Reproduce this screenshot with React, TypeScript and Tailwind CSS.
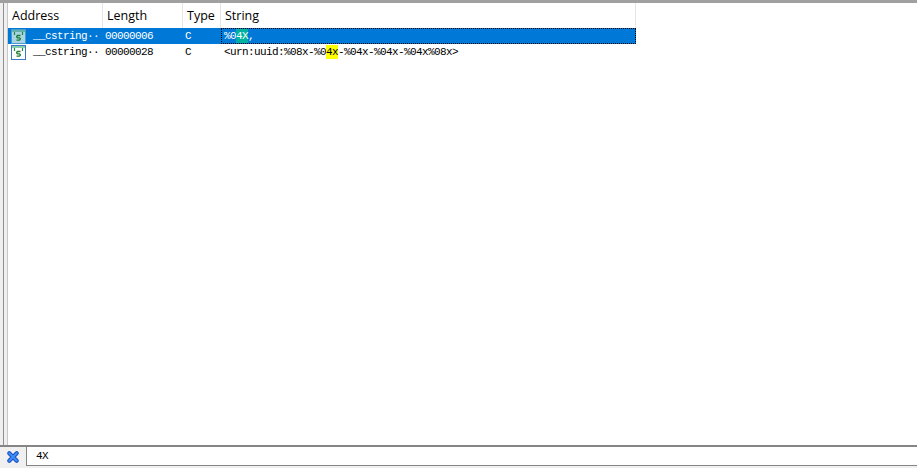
const columns = [
  { label: 'Address', width: 'w-[95px]' },
  { label: 'Length', width: 'w-[80px]' },
  { label: 'Type', width: 'w-[38px]' },
  { label: 'String', width: 'w-[415px]' },
]

const StringIcon = ({ selected }: { selected?: boolean }) => (
  <svg width="15" height="15" viewBox="0 0 15 15" className="shrink-0">
    <rect x="0.5" y="0.5" width="14" height="14" fill={selected ? '#a8d4e4' : '#ffffff'} stroke={selected ? '#4a9ad0' : '#3c78c8'} />
    <rect x="1" y="1" width="13" height="2" fill={selected ? '#62b0a8' : '#86cfa8'} />
    <path d="M3.500 3v3M11.500 3v3" stroke="#1f8a3c" strokeWidth="1.200" />
    <path d="M9.500 6.500H6.500L5.700 7.300v.7l.8.8h2l.8.8v.7l-.8.8H5.500" fill="none" stroke="#1f7a30" strokeWidth="1.300" />
  </svg>
)

const Row = ({ selected, length, children }: { selected?: boolean; length: string; children: React.ReactNode }) => (
  <div className={`flex h-4 w-[628px] items-center font-['Liberation_Mono',monospace] text-[11px] tracking-[-0.6px] ${selected ? 'bg-[#0078d7] text-white' : 'text-black'}`}>
    <div className="flex w-[95px] items-center pl-[3px]">
      <StringIcon selected={selected} />
      <span className="ml-[7px] whitespace-nowrap">__cstring··</span>
    </div>
    <div className="w-[80px] pl-[2px]">{length}</div>
    <div className="w-[38px] pl-[2px]">C</div>
    <div className={`flex h-full flex-1 items-end border border-dotted pl-[2px] leading-[14px] ${selected ? 'border-black' : 'border-transparent'}`}>{children}</div>
  </div>
)

export default function App() {
  return (
    <div className="flex h-[468px] w-[917px] flex-col overflow-hidden bg-[#f0f0f0]">
      <div className="h-[3px] shrink-0 bg-[#a0a0a0]" />
      <div className="flex min-h-0 flex-1">
        <div className="ml-[3px] w-[5px] border-l border-r border-l-[#909090] border-r-[#c8c8c8]" />
        <div className="min-w-0 flex-1 bg-white">
          <div className="flex h-[25px] font-['Open_Sans',sans-serif] text-[12.5px] text-black">
            {columns.map((col) => (
              <div key={col.label} className={`${col.width} flex items-center border-r border-[#e5e5e5] pl-[4px] pt-[1px]`}>
                {col.label}
              </div>
            ))}
          </div>
          <Row selected length="00000006">
            <span className="whitespace-pre">%0</span>
            <span className="bg-[#00b0a0]">4X</span>
            <span>,</span>
          </Row>
          <Row length="00000028">
            <span className="whitespace-pre">{'<urn:uuid:%08x-%0'}</span>
            <span className="bg-[#ffff00]">4x</span>
            <span className="whitespace-pre">{'-%04x-%04x-%04x%08x>'}</span>
          </Row>
        </div>
      </div>
      <div className="h-[2px] shrink-0 bg-[#858585]" />
      <div className="flex h-[21px] shrink-0 items-stretch">
        <div className="flex w-[26px] items-center justify-center pb-[2px]">
          <svg width="14" height="14" viewBox="0 0 15 15">
            <path d="M3.500 3.500 11.500 11.500M11.500 3.500 3.500 11.500" stroke="#1c54c8" strokeWidth="4.500" strokeLinecap="round" />
            <path d="M3.500 3.500 11.500 11.500M11.500 3.500 3.500 11.500" stroke="#3f8ff2" strokeWidth="2" strokeLinecap="round" />
          </svg>
        </div>
        <div className="mb-[2px] flex flex-1 items-center border-b border-l border-[#858585] bg-white pl-[9px] font-['Liberation_Mono',monospace] text-[11px] tracking-[-0.6px] text-black">
          4X
        </div>
      </div>
    </div>
  )
}
